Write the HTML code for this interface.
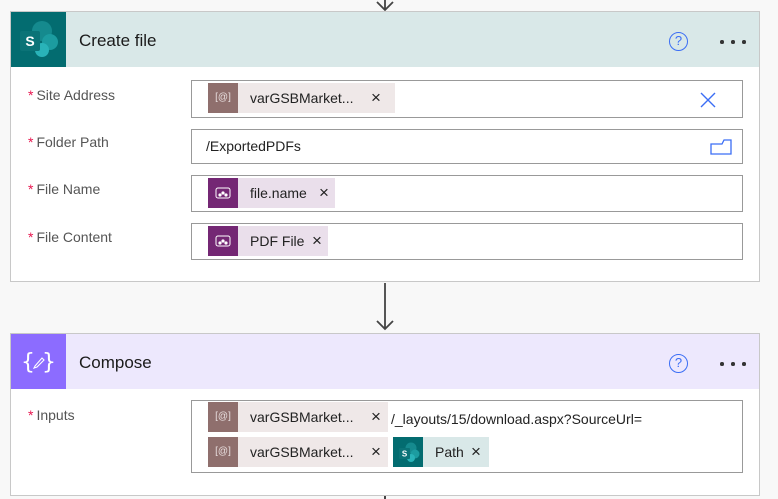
<!DOCTYPE html>
<html><head><meta charset="utf-8"><style>
*{margin:0;padding:0;box-sizing:border-box}
body{width:778px;height:499px;background:#f8f8f8;position:relative;overflow:hidden;font-family:"Segoe UI","Liberation Sans",sans-serif;color:#222}
.abs{position:absolute}
.card{position:absolute;left:10px;width:750px;background:#fff;border:1px solid #c8c8c8}
.hdr{position:absolute;left:0;top:0;right:0;height:55px}
.ico{position:absolute;left:0;top:0;width:55px;height:55px}
.title{position:absolute;left:68px;top:19px;font-size:17px;color:#1b1b1b}
.help{position:absolute;left:658px;top:20px;width:19px;height:19px;border:1.5px solid #3b6ef5;border-radius:50%;color:#3b6ef5;font-size:13px;text-align:center;line-height:16px}
.dots{position:absolute;left:709px;top:28px;width:30px;height:4px}
.dots i{position:absolute;top:0;width:3.5px;height:3.5px;background:#333;border-radius:50%}
.lbl{position:absolute;left:17px;font-size:14px;color:#555}
.lbl b{color:#e8154e;font-weight:normal;margin-right:3px}
.inp{position:absolute;left:180px;width:552px;border:1px solid #999;background:#fff}
.tok{position:absolute;height:30px;font-size:14px;line-height:30px;color:#222}
.tok .ti{position:absolute;left:0;top:0;width:30px;height:30px}
.tok .tt{position:absolute;left:42px}
.tok .tx{position:absolute;font-size:17px}
.var{background:#efe8e8}.var .ti{background:#8f6f6d;color:#e8dede;font-size:10px;text-align:center}
.pa{background:#eadfeb}.pa .ti{background:#742774}
.sp{background:#d9e8e8}.sp .ti{background:#036c70}
</style></head><body>
<svg class="abs" style="left:374px;top:0" width="22" height="12"><path d="M11 0V10M3 2L11 10L19 2" stroke="#444" stroke-width="1.8" fill="none"/></svg>

<div class="card" style="top:11px;height:271px">
 <div class="hdr" style="background:#d9e8e8"></div>
 <div class="ico" style="background:#036c70">
  <svg width="55" height="55"><circle cx="31" cy="19" r="10" fill="#158a8e"/><circle cx="39" cy="30" r="8" fill="#1c9ca0"/><circle cx="31" cy="38" r="7" fill="#29b3b8"/><rect x="9" y="19" width="20" height="20" rx="2" fill="#0b7377"/><text x="19" y="34" font-size="14" font-weight="bold" fill="#fff" text-anchor="middle" font-family="Liberation Sans">S</text></svg>
 </div>
 <div class="title">Create file</div>
 <div class="help">?</div>
 <div class="dots"><i style="left:0"></i><i style="left:11px"></i><i style="left:22px"></i></div>

 <div class="lbl" style="top:75px"><b>*</b>Site Address</div>
 <div class="inp" style="top:68px;height:38px">
  <div class="tok var" style="left:16px;top:2px;width:187px"><div class="ti">[@]</div><span class="tt">varGSBMarket...</span><span class="tx" style="left:163px">×</span></div>
  <svg class="abs" style="left:508px;top:11px" width="16" height="16"><path d="M1 1L15 15M15 1L1 15" stroke="#3b6ef5" stroke-width="1.4"/></svg>
 </div>

 <div class="lbl" style="top:122px"><b>*</b>Folder Path</div>
 <div class="inp" style="top:117px;height:35px"><span class="abs" style="left:14px;top:8px;font-size:14px">/ExportedPDFs</span>
  <svg class="abs" style="left:518px;top:9px" width="22" height="16"><path d="M1 5H12L14 1H21V15H1Z M1 5V15" stroke="#3b6ef5" stroke-width="1.3" fill="none"/></svg>
 </div>

 <div class="lbl" style="top:169px"><b>*</b>File Name</div>
 <div class="inp" style="top:163px;height:37px">
  <div class="tok pa" style="left:16px;top:2px;width:127px"><div class="ti"><svg width="30" height="30"><rect x="8" y="10" width="14" height="10" rx="2" fill="none" stroke="#fff" stroke-width="1"/><circle cx="12" cy="17" r="1.6" fill="#fff"/><circle cx="15" cy="15" r="1.6" fill="#fff"/><circle cx="18" cy="17" r="1.6" fill="#fff"/></svg></div><span class="tt">file.name</span><span class="tx" style="left:111px">×</span></div>
 </div>

 <div class="lbl" style="top:217px"><b>*</b>File Content</div>
 <div class="inp" style="top:211px;height:37px">
  <div class="tok pa" style="left:16px;top:2px;width:120px"><div class="ti"><svg width="30" height="30"><rect x="8" y="10" width="14" height="10" rx="2" fill="none" stroke="#fff" stroke-width="1"/><circle cx="12" cy="17" r="1.6" fill="#fff"/><circle cx="15" cy="15" r="1.6" fill="#fff"/><circle cx="18" cy="17" r="1.6" fill="#fff"/></svg></div><span class="tt">PDF File</span><span class="tx" style="left:104px">×</span></div>
 </div>
</div>

<svg class="abs" style="left:374px;top:283px" width="22" height="50"><path d="M11 0V46M3 38L11 46L19 38" stroke="#444" stroke-width="1.8" fill="none"/></svg>

<div class="card" style="top:333px;height:163px">
 <div class="hdr" style="background:#ede8fd"></div>
 <div class="ico" style="background:#8c6cff">
  <svg width="55" height="55"><text x="27.5" y="35" font-size="22" fill="#fff" text-anchor="middle" font-family="DejaVu Sans">{ }</text><path d="M24 32L31 24L33 26L26 33L23 34Z" fill="none" stroke="#fff" stroke-width="1.1"/></svg>
 </div>
 <div class="title">Compose</div>
 <div class="help">?</div>
 <div class="dots"><i style="left:0"></i><i style="left:11px"></i><i style="left:22px"></i></div>

 <div class="lbl" style="top:73px"><b>*</b>Inputs</div>
 <div class="inp" style="top:66px;height:73px">
  <div class="tok var" style="left:16px;top:1px;width:180px"><div class="ti">[@]</div><span class="tt">varGSBMarket...</span><span class="tx" style="left:163px">×</span></div>
  <span class="abs" style="left:199px;top:10px;font-size:14px">/_layouts/15/download.aspx?SourceUrl=</span>
  <div class="tok var" style="left:16px;top:36px;width:180px"><div class="ti">[@]</div><span class="tt">varGSBMarket...</span><span class="tx" style="left:163px">×</span></div>
  <div class="tok sp" style="left:201px;top:36px;width:96px"><div class="ti"><svg width="30" height="30"><circle cx="18" cy="11" r="5.5" fill="#158a8e"/><circle cx="22" cy="17" r="4.5" fill="#1c9ca0"/><circle cx="18" cy="21" r="4" fill="#29b3b8"/><rect x="6" y="11" width="11" height="11" rx="1" fill="#0b7377"/><text x="11.5" y="19.5" font-size="8" font-weight="bold" fill="#fff" text-anchor="middle" font-family="Liberation Sans">S</text></svg></div><span class="tt">Path</span><span class="tx" style="left:78px">×</span></div>
 </div>
</div>
<div class="abs" style="left:384px;top:496px;width:2px;height:3px;background:#444"></div>
</body></html>
